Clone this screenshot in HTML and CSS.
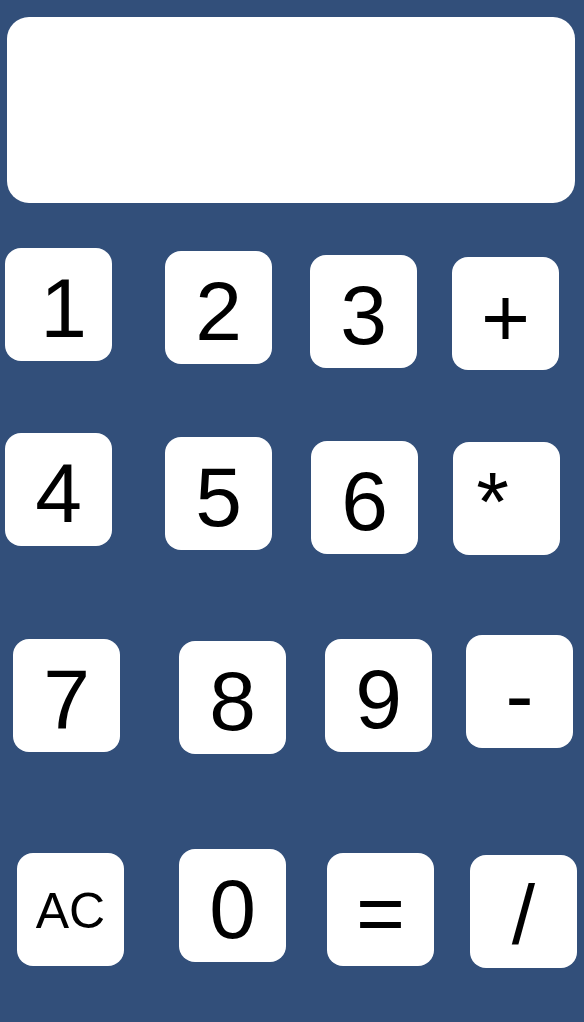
FILE: index.html
```html
<!DOCTYPE html>
<html lang="en">
<head>
<meta charset="utf-8">
<title>Calculator</title>
<link rel="stylesheet" href="styles.css">
</head>
<body>
<main class="calc">
  <div class="display"></div>
  <div class="pad">
    <div class="row">
      <button class="key k1">1</button>
      <button class="key k2">2</button>
      <button class="key k3">3</button>
      <button class="key k4">+</button>
    </div>
    <div class="row">
      <button class="key k5">4</button>
      <button class="key k6">5</button>
      <button class="key k7">6</button>
      <button class="key k8">*</button>
    </div>
    <div class="row">
      <button class="key k9">7</button>
      <button class="key k10">8</button>
      <button class="key k11">9</button>
      <button class="key k12">-</button>
    </div>
    <div class="row">
      <button class="key k13 small">AC</button>
      <button class="key k14">0</button>
      <button class="key k15">=</button>
      <button class="key k16">/</button>
    </div>
  </div>
</main>
</body>
</html>
```

FILE: styles.css
```css
html, body {
  margin: 0;
  padding: 0;
  background: #324f7a;
}

body {
  width: 584px;
  height: 1022px;
  overflow: hidden;
  font-family: "Liberation Sans", Arial, sans-serif;
}

.calc {
  display: flex;
  flex-direction: column;
  padding-top: 17px;
}

.display {
  margin-left: 7px;
  width: 568px;
  height: 186px;
  background: #ffffff;
  border-radius: 22px;
}

.pad {
  margin-top: 45px;
  display: grid;
  grid-template-rows: 184px 203px 214px auto;
}

.row {
  display: flex;
  align-items: flex-start;
}

.key {
  flex: none;
  box-sizing: border-box;
  width: 107px;
  height: 113px;
  border: none;
  padding: 7px 0 0 0;
  background: #ffffff;
  border-radius: 16px;
  color: #000000;
  font-family: "Liberation Sans", Arial, sans-serif;
  font-size: 84px;
  line-height: 1;
  display: flex;
  align-items: center;
  justify-content: center;
}

.key.small {
  font-size: 50px;
  padding-top: 3px;
}

/* row 1 (top 248) */
.k1 { margin-left: 5px;  margin-top: 0; padding-left: 10px; }
.k2 { margin-left: 53px; margin-top: 3px; }
.k3 { margin-left: 38px; margin-top: 7px; }
.k4 { margin-left: 35px; margin-top: 9px; }

/* row 2 (top 432) */
.k5 { margin-left: 5px;  margin-top: 1px; }
.k6 { margin-left: 53px; margin-top: 5px; }
.k7 { margin-left: 39px; margin-top: 9px; }
.k8 { margin-left: 35px; margin-top: 10px; padding-right: 28px; }

/* row 3 (top 635) */
.k9  { margin-left: 13px; margin-top: 4px; }
.k10 { margin-left: 59px; margin-top: 6px; }
.k11 { margin-left: 39px; margin-top: 4px; }
.k12 { margin-left: 34px; margin-top: 0; }

/* row 4 (top 849) */
.k13 { margin-left: 17px; margin-top: 4px; }
.k14 { margin-left: 55px; margin-top: 0; }
.k15 { margin-left: 41px; margin-top: 4px; }
.k16 { margin-left: 36px; margin-top: 6px; }
```
